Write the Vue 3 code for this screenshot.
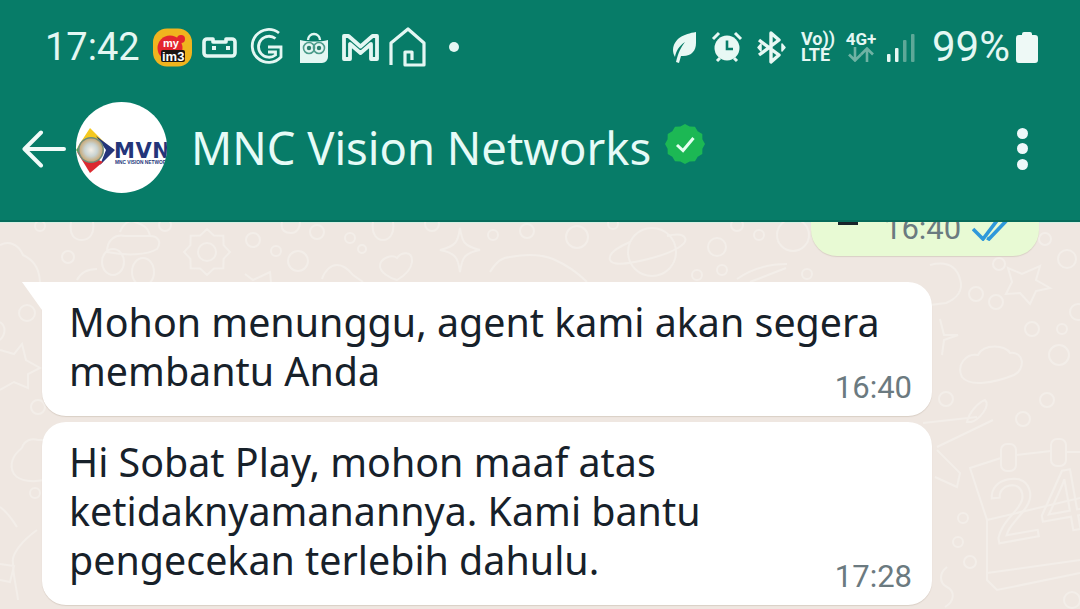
<template>
  <div class="screen">
    <header class="top">
      <div class="status">
        <div class="status-left">
          <span class="clock">17:42</span>
          <svg width="39" height="39" viewBox="0 0 39 39">
            <rect width="39" height="38" y="0.5" rx="14" fill="#f0b41e" />
            <circle cx="17" cy="20" r="12.500" fill="#e4252f" />
            <circle cx="28" cy="11" r="4" fill="#e4252f" />
            <text x="10" y="19" class="im3-my">my</text>
            <rect x="8" y="22" width="24" height="12" rx="2" fill="#1a1512" />
            <text x="9" y="32.500" class="im3-txt">im3</text>
          </svg>
          <svg width="38" height="21" viewBox="0 0 38 21" fill="none" stroke="#e4f7f3" stroke-width="3.600" stroke-linejoin="round">
            <path d="M2 5a3 3 0 0 1 3-3h6v3h13V2h6a3 3 0 0 1 3 3v11a3 3 0 0 1-3 3H5a3 3 0 0 1-3-3z" />
            <rect x="10" y="9" width="4" height="4" fill="#e4f7f3" stroke="none" />
            <rect x="24" y="9" width="4" height="4" fill="#e4f7f3" stroke="none" />
          </svg>
          <svg width="39" height="38" viewBox="0 0 39 38" fill="none" stroke="#e4f7f3" stroke-width="2.800">
            <path d="M29 5A16.500 16.500 0 1 0 31 29V19H18" />
            <path d="M25.500 10.500A10.500 10.500 0 1 0 25.500 27V24H18" />
          </svg>
          <svg width="33" height="33" viewBox="0 0 33 33">
            <path d="M9 9a6 6 0 0 1 12 0" fill="none" stroke="#e4f7f3" stroke-width="2.400" />
            <path d="M1 9c9 2 20 2 28 0v17a6 6 0 0 1-6 6H1z" fill="#e4f7f3" />
            <circle cx="10" cy="17" r="5.500" fill="none" stroke="#4c9c8b" stroke-width="1.600" />
            <circle cx="20" cy="17" r="5.500" fill="none" stroke="#4c9c8b" stroke-width="1.600" />
            <circle cx="10" cy="17" r="2.200" fill="#2c7f6e" />
            <circle cx="20" cy="17" r="2.200" fill="#2c7f6e" />
          </svg>
          <svg width="37" height="28" viewBox="0 0 37 28" fill="none" stroke="#e4f7f3" stroke-width="3.800" stroke-linejoin="round">
            <path d="M2 3h4.500l12 10.500L30.500 3H35v23h-6V11l-10.500 9L8 11v15H2z" />
          </svg>
          <svg width="37" height="40" viewBox="0 0 37 40" fill="none" stroke="#e4f7f3" stroke-width="3.200" stroke-linejoin="round">
            <path d="M2 38V16L19 2l16 14v22H16V25h7v8" />
          </svg>
          <i class="notif-dot" />
        </div>
        <div class="status-right">
          <svg width="29" height="32" viewBox="0 0 29 32">
            <path d="M24 1C12 3 2 7 1 19c0 3 1 5 2 7 1-6 4-11 10-15-4 5-7 11-9 20l3 1 2-7c10 1 15-5 15-13z" fill="#e8f8f4" />
          </svg>
          <svg width="35" height="32" viewBox="0 0 35 32">
            <circle cx="16" cy="17" r="12.500" fill="#e8f8f4" />
            <path d="M16 9.500V18h6" fill="none" stroke="#087d6a" stroke-width="2.600" />
            <path d="M2 8l6-6M24 2l6 6M6 30l3-3M26 30l-3-3" stroke="#e8f8f4" stroke-width="3" fill="none" />
          </svg>
          <svg width="35" height="33" viewBox="0 0 35 33" fill="none" stroke="#e8f8f4" stroke-width="3.400" stroke-linejoin="round">
            <path d="M3 9l20 15-8 7V2l8 7L3 24" />
            <path d="M26 13l3 3.500-3 3.500z" fill="#e8f8f4" stroke-width="1.500" />
            <path d="M5 13l-3 3.500 3 3.500z" fill="#e8f8f4" stroke-width="1.500" />
          </svg>
          <div class="volte">
            <span>Vo))</span>
            <span>LTE</span>
          </div>
          <div class="net">
            <span>4G+</span>
            <svg width="28" height="15" viewBox="0 0 28 15" fill="none" stroke="#6fb3a4" stroke-width="2.600">
              <path d="M8 0v13M2 7.500l6 6 6-6" />
              <path d="M20 15V2M14 7.500l6-6 6 6" />
            </svg>
          </div>
          <svg width="35" height="29" viewBox="0 0 35 29">
            <rect x="0" y="21" width="3.500" height="8" rx="1" fill="#e8f8f4" />
            <rect x="8" y="15" width="3.500" height="14" rx="1" fill="#e8f8f4" />
            <rect x="16" y="7" width="3.500" height="22" rx="1" fill="#5ea898" />
            <rect x="24" y="1" width="3.500" height="28" rx="1" fill="#5ea898" />
          </svg>
          <span class="batt-text">99%</span>
          <svg class="batt" width="22" height="31" viewBox="0 0 22 31">
            <path d="M6 3V2a2 2 0 0 1 2-2h6a2 2 0 0 1 2 2v1h3a3 3 0 0 1 3 3v22a3 3 0 0 1-3 3H3a3 3 0 0 1-3-3V6a3 3 0 0 1 3-3z" fill="#eef9f6" />
          </svg>
        </div>
      </div>

      <div class="appbar">
        <svg class="back" width="44" height="38" viewBox="0 0 44 38" fill="none" stroke="#f1fbf9" stroke-width="4" stroke-linecap="round" stroke-linejoin="round">
          <path d="M42 19H3M19 2.500L2.500 19 19 35.500" />
        </svg>
        <div class="avatar">
          <svg width="91" height="91" viewBox="0 0 91 91">
            <defs>
              <radialGradient id="lens">
                <stop offset="0" stop-color="#f4efe6" />
                <stop offset="0.55" stop-color="#c9d3d2" />
                <stop offset="1" stop-color="#c9a977" />
              </radialGradient>
            </defs>
            <path d="M1 46L14 26 30 42H6z" fill="#f4c81f" />
            <path d="M20 34L39 48 24 63 30 48z" fill="#23357a" />
            <path d="M1 50L14 71 27 60 14 54z" fill="#dc2a30" />
            <path d="M0 48l6-8v16z" fill="#5e9c4a" />
            <circle cx="15" cy="48" r="13" fill="#6f8c7c" />
            <circle cx="15" cy="48" r="11.500" fill="url(#lens)" />
            <text x="38" y="56" class="mvn">MVN</text>
            <text x="39" y="62" class="mvn-sub">MNC VISION NETWORK</text>
          </svg>
        </div>
        <h1 class="title">MNC Vision Networks</h1>
        <svg class="verified" width="40" height="40" viewBox="0 0 40 40">
          <path :d="badgePath" fill="#1cb854" />
          <path d="M12 21l6 5.500L28.500 14" fill="none" stroke="#e6fff1" stroke-width="3" />
        </svg>
        <div class="kebab"><i /><i /><i /></div>
      </div>
    </header>

    <main class="chat">
      <!-- wallpaper doodles, placed by hand -->
      <svg class="doodles" width="1080" height="387" viewBox="0 0 1080 387" fill="none" stroke="#f3eee9" stroke-width="2">
        <circle v-for="c in rings" :key="c.join()" :cx="c[0]" :cy="c[1]" :r="c[2]" />
        <path :d="gearPath" />
        <circle cx="207" cy="30" r="9" />
        <path d="M71 0c-2 14 4 18 11 18s13-6 11-18M120 10c4-10 10-12 15-10 6 2 13 4 15 14" />
        <path d="M107 30c0-12 8-18 18-16h25c8 0 12 6 7 13-10 6-30 7-50 3z" />
        <ellipse cx="113" cy="40" rx="11" ry="13" />
        <ellipse cx="143" cy="50" rx="11" ry="14" />
        <path d="M0 23c8-4 18-2 23 10 8 4 16 10 17 27M77 58c4-8 12-11 20-11" />
        <path d="M282 0c-2 9 4 11 9 11s9-4 9-11M373 0c-2 12 4 18 10 18s12-6 10-18" />
        <path d="M397 36c4-6 16-8 15 4-1 8-8 14-15 18-8-2-17-8-17-14 0-8 12-12 17-8z" />
        <path d="M245 52l8 6 17-8 1 10M322 57c3-9 9-14 15-14 7 0 12 5 16 10l10 7" />
        <path d="M460 6c2 14 4 18 20 22-16 3-18 8-20 22-2-14-4-19-20-22 16-4 18-8 20-22z" />
        <path d="M490 50c6-10 12-15 20-15 20-4 33-2 43 2 14 6 25 14 34 23" />
        <circle cx="652" cy="30" r="24" />
        <path d="M630 20c-14 6-22 12-20 18 2 6 20 4 42-2 22-6 36-14 33-20-2-4-10-4-18-2" />
        <circle cx="793" cy="13" r="16" />
        <path d="M737 57c14-10 32-15 50-15M750 60l36-14" />
        <path d="M930 43c16-4 26 0 30 14 4 12-4 20-14 24l-16 2" />
        <path d="M1040 44l-4 14 14 8-14 3-6 13-10-11-14 1 6-12-4-14 14 6z" />
        <path d="M940 97l4 16 14 0-14 5-2 15" />
        <path d="M962 155c-6-12 4-24 16-22 6-12 28-10 32-2 14-2 16 16 4 22-20 8-44 12-52 2z" />
        <path d="M923 201l54-6M937 225l56-27M967 200c2-10 12-20 18-22 6 6-6 20-14 22z" />
        <path d="M937 228l23 23-3 14-22-10" />
        <rect x="1001" y="222" width="15" height="27" rx="6" />
        <rect x="1051" y="217" width="15" height="27" rx="6" />
        <path d="M1016 233l35-4M1066 230h14M1001 236l-31 10 17 52v60l10 10 83-17M987 298l93-22M987 351l93-13" />
        <text x="995" y="322" class="d24" transform="rotate(-10 995 322)">24</text>
        <path d="M947 345c-8 6-8 16 0 20s8 14-2 20" />
        <path d="M0 100c6 4 6 12 0 18M0 128l14 4 8-10 4 16 14 8-12 6 0 14-14-6-14 8" />
        <path d="M22 226c2-8 10-10 16-8l6 0M44 258c-10 2-24 2-30-6-6-10 0-20 8-26" />
        <path d="M0 285c6 4 12 12 17 20M37 308c-14 10-26 24-24 33 0 14 4 26 5 37M0 342l14 2-4 16-10-2" />
      </svg>

      <div class="bubble out">
        <span class="dash" />
        <div class="meta-out">
          <span class="time out-time">16:40</span>
          <svg width="38" height="24" viewBox="0 0 38 24" fill="none" stroke="#2f98da" stroke-width="3.600">
            <path d="M1 12l10 10L27 1" />
            <path d="M15 21l2 1L37 1" />
          </svg>
        </div>
      </div>

      <div class="bubble in first">
        <p>Mohon menunggu, agent kami akan segera membantu Anda</p>
        <div class="time">16:40</div>
      </div>
      <div class="bubble in">
        <p>Hi Sobat Play, mohon maaf atas ketidaknyamanannya. Kami bantu pengecekan terlebih dahulu.</p>
        <div class="time">17:28</div>
      </div>
    </main>
  </div>
</template>

<script setup>
// scalloped edge, used by the verified badge and the wallpaper gear
function scallop (cx, cy, r1, r2, n) {
  let d = ''
  for (let i = 0; i < n * 2; i++) {
    const a = (i / (n * 2)) * Math.PI * 2
    const r = i % 2 ? r2 : r1
    d += `${i ? 'L' : 'M'}${(cx + Math.cos(a) * r).toFixed(1)} ${(cy + Math.sin(a) * r).toFixed(1)}`
  }
  return d + 'z'
}

const badgePath = scallop(20, 20, 20, 18, 12)
const gearPath = scallop(207, 30, 23, 18, 8)

// small rings of the wallpaper: x, y, r
const rings = [
  [40, 4, 5], [68, 35, 6], [165, 3, 6], [253, 18, 7], [276, 29, 5], [298, 39, 10],
  [317, 10, 7], [350, 16, 5], [362, 27, 4], [432, 2, 7], [493, 13, 5], [527, 9, 7],
  [577, 15, 11], [613, 2, 5], [717, 25, 9], [759, 13, 5], [697, 53, 5], [722, 48, 5],
  [807, 52, 5], [737, 3, 6], [976, 72, 7], [996, 80, 7], [999, 42, 6], [1045, 17, 6],
  [1067, 37, 9], [1032, 107, 7], [1062, 107, 5], [1059, 133, 10], [1078, 90, 8],
  [946, 177, 7], [1047, 178, 7], [1023, 197, 7], [963, 296, 5], [958, 320, 5],
  [970, 340, 6], [1072, 378, 8], [27, 91, 8], [38, 185, 7], [35, 271, 5]
]
</script>

<style>
html, body {
  margin: 0;
  overflow: hidden;
}
</style>

<style scoped>
.screen {
  width: 1080px;
  height: 609px;
  display: flex;
  flex-direction: column;
  overflow: hidden;
  font-family: "Noto Sans", sans-serif;
}

.top {
  height: 222px;
  flex: none;
  box-sizing: border-box;
  background: #077c68;
  border-bottom: 2px solid #076c5b;
  color: #e4f7f3;
}

.status {
  height: 94px;
  display: flex;
  justify-content: space-between;
  align-items: center;
  padding: 0 42px 0 45px;
}

.status-left,
.status-right {
  display: flex;
  align-items: center;
  gap: 10px;
}

.clock,
.batt-text {
  font-family: Roboto, sans-serif;
  font-size: 38px;
  line-height: 44px;
}

.clock {
  margin-right: 3px;
}

.batt-text {
  font-size: 42px;
}

.batt {
  margin-left: -4px;
}

.im3-my {
  font: 700 11px "Liberation Sans", sans-serif;
  fill: #fff;
}

.im3-txt {
  font: 700 13px "Liberation Sans", sans-serif;
  fill: #fff;
}

.notif-dot {
  width: 10px;
  height: 10px;
  border-radius: 50%;
  background: #e4f7f3;
  margin-left: 13px;
}

.volte {
  width: 34px;
  display: flex;
  flex-direction: column;
  font: 700 18px/16px Roboto, sans-serif;
}

.net {
  width: 32px;
  display: flex;
  flex-direction: column;
  align-items: center;
  font: 700 17px/15px Roboto, sans-serif;
}

.appbar {
  height: 128px;
  display: flex;
  align-items: center;
  padding: 0 0 22px 22px;
  box-sizing: border-box;
}

.back {
  margin-top: 4px;
}

.avatar {
  width: 91px;
  height: 91px;
  border-radius: 50%;
  background: #fff;
  overflow: hidden;
  margin-left: 10px;
  flex: none;
}

.mvn {
  font: 700 21px "DejaVu Sans", sans-serif;
  letter-spacing: 0.5px;
  fill: #23357a;
}

.mvn-sub {
  font: 700 4.800px "Liberation Sans", sans-serif;
  fill: #23357a;
}

.title {
  margin: -1px 0 0 24px;
  font-size: 45.400px;
  font-weight: 400;
  line-height: 60px;
  color: #e6fbf7;
  white-space: nowrap;
}

.verified {
  margin: -6px 0 0 14px;
}

.kebab {
  margin: 3px 52px 0 auto;
  display: flex;
  flex-direction: column;
  gap: 4.500px;
}

.kebab i {
  width: 11px;
  height: 11px;
  border-radius: 50%;
  background: #eef8fa;
}

.chat {
  position: relative;
  flex: 1;
  min-height: 0;
  overflow: hidden;
  background: #efe7e1;
  box-shadow: inset 0 1px 0 #d8efe3;
  display: flex;
  flex-direction: column;
  align-items: flex-start;
  padding-left: 42px;
}

.doodles {
  position: absolute;
  left: 0;
  top: 0;
}

.d24 {
  font: 400 88px "Liberation Sans", sans-serif;
}

.bubble {
  position: relative;
  flex: none;
  box-sizing: border-box;
  border-radius: 24px;
  box-shadow: 0 1px 1px rgba(120, 100, 80, 0.18);
}

.bubble.out {
  width: 228px;
  height: 60px;
  margin: -26px 0 26px 769px;
  background: #e8fad4;
  border-radius: 26px;
}

.dash {
  position: absolute;
  left: 27px;
  bottom: 31px;
  width: 20px;
  height: 3px;
  background: #182229;
}

.meta-out {
  position: absolute;
  left: 73px;
  bottom: 9px;
  display: flex;
  align-items: center;
  gap: 11px;
}

.bubble.in {
  width: 890px;
  padding: 16px 20px 10px 27px;
  margin-bottom: 6px;
  background: #fff;
  color: #17212a;
}

.bubble.first {
  border-top-left-radius: 0;
}

.bubble.first::before {
  content: "";
  position: absolute;
  left: -20px;
  top: 0;
  width: 20px;
  height: 28px;
  background: #fff;
  clip-path: polygon(0 0, 100% 0, 100% 100%);
}

.bubble.in p {
  margin: 0;
  font-size: 39.400px;
  line-height: 49px;
}

.time {
  font: 400 31px/36px Roboto, sans-serif;
  color: #6b7a80;
  text-align: right;
  margin-top: -26px;
}

.out-time {
  margin: 0;
}
</style>
